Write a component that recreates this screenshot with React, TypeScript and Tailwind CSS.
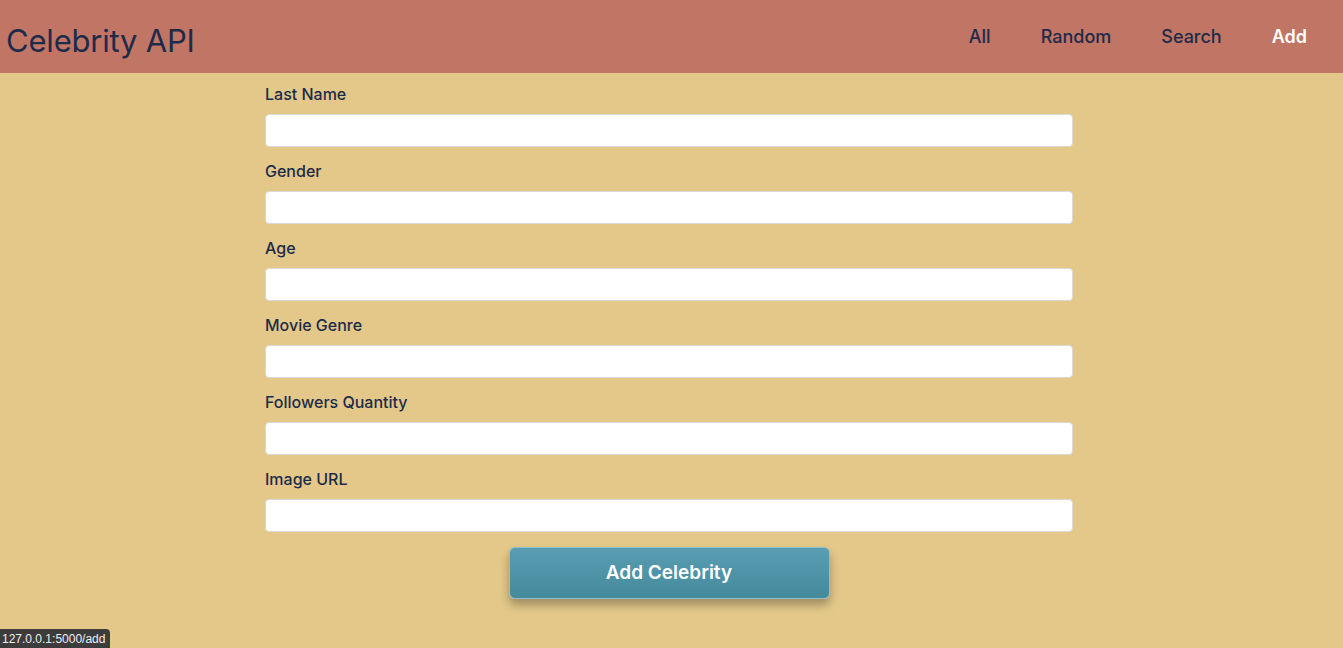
const FIELDS = ['Last Name', 'Gender', 'Age', 'Movie Genre', 'Followers Quantity', 'Image URL']

const NAV = [
  { label: 'All', active: false },
  { label: 'Random', active: false },
  { label: 'Search', active: false },
  { label: 'Add', active: true },
]

export default function App() {
  return (
    <div
      className="relative min-h-[648px] bg-[#e3c889] text-[#1d2b4a]"
      style={{ fontFamily: 'Inter, "Noto Sans", sans-serif' }}
    >
      <header className="flex h-[73px] items-center justify-between bg-[#c17564] pl-[6px] pr-[36px]">
        <h1 className="pt-[7px] text-[31px] font-normal leading-none tracking-[-0.2px]">Celebrity API</h1>
        <nav className="flex items-center gap-[50px] text-[18px] font-medium">
          {NAV.map((item) => (
            <a key={item.label} className={item.active ? 'font-semibold text-white' : 'text-[#1d2b4a]'}>
              {item.label}
            </a>
          ))}
        </nav>
      </header>

      <div className="flex justify-center pr-[5px]">
        <main className="flex w-[808px] flex-col pt-[9px]">
          {FIELDS.map((field) => (
            <label key={field} className="mb-[12px] flex flex-col">
              <span className="mb-[8px] text-[16px] font-medium leading-[24px]">{field}</span>
              <input
                type="text"
                className="h-[33px] w-full rounded-[4px] border border-[#d9d9d9] bg-white px-3 text-[16px] outline-none"
              />
            </label>
          ))}
          <div className="flex justify-center pt-[3px]">
            <button className="h-[52px] w-[321px] rounded-[6px] border border-[#8fbfcc] bg-gradient-to-b from-[#5a9db3] to-[#438a9b] text-[19px] font-semibold text-white shadow-[0_6px_10px_rgba(0,0,0,0.3)]">
              Add Celebrity
            </button>
          </div>
        </main>
      </div>

      <div
        className="absolute bottom-0 left-0 flex h-[19px] items-center rounded-tr-[4px] bg-[#3c3c3c] pl-[2px] pr-[5px] text-[12px] text-[#f0f0f0]"
        style={{ fontFamily: '"Liberation Sans", sans-serif' }}
      >
        127.0.0.1:5000/add
      </div>
    </div>
  )
}
